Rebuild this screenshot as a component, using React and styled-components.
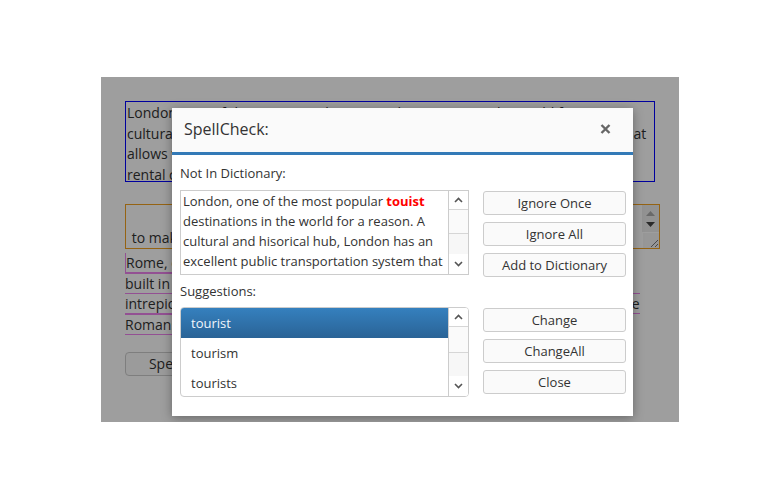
import styled, { createGlobalStyle } from "styled-components";

const GlobalStyle = createGlobalStyle`
  html, body {
    margin: 0;
    padding: 0;
    background: #ffffff;
    font-family: "Open Sans", "Noto Sans", Arial, sans-serif;
    color: #333333;
  }
  * { box-sizing: border-box; }
`;

const Page = styled.div`
  width: 780px;
  height: 500px;
  padding: 77px 0 0 101px;
`;

const Demo = styled.div`
  position: relative;
  width: 578px;
  height: 345px;
  padding: 24px;
  font-size: 14px;
  overflow: hidden;
  background: #ffffff;
`;

const RichBox = styled.div`
  width: 530px;
  height: 81px;
  border: 1px solid #0000ff;
  padding: 1px 1px 0;
  line-height: 20.5px;
  white-space: nowrap;
  overflow: hidden;
`;

const TextArea = styled.div`
  position: relative;
  margin-top: 22px;
  width: 535px;
  height: 45px;
  border: 1px solid #f0a020;
  padding: 0 24px 0 2px;
  line-height: 22px;
  white-space: pre;
  overflow: hidden;
`;

const Spinner = styled.div`
  position: absolute;
  top: 0;
  right: 0;
  width: 17px;
  height: 100%;
  background: #ececec;
  display: flex;
  flex-direction: column;
  align-items: center;
`;

const SpinArrows = styled.div`
  height: 27px;
  display: flex;
  flex-direction: column;
  align-items: center;
  justify-content: center;
  gap: 6px;
`;

const Grip = styled.div`
  flex: 1;
  width: 100%;
  border-top: 1px solid #ffffff;
  border-left: 1px solid #ffffff;
  background: #f4f4f4;
  display: flex;
  align-items: flex-end;
  justify-content: flex-end;
`;

const RomeBox = styled.div`
  margin-top: 4px;
  width: 525px;
  line-height: 20.5px;
  white-space: nowrap;
  overflow: hidden;
  span {
    border: 1px solid #ee82ee;
  }
`;

const DemoButton = styled.div`
  margin-top: 17px;
  width: 122px;
  height: 24px;
  border: 1px solid #cccccc;
  border-radius: 4px;
  background: #fafafa;
  font-size: 14px;
  line-height: 22px;
  text-align: center;
`;

const Overlay = styled.div`
  position: absolute;
  inset: 0;
  background: rgba(0, 0, 0, 0.38);
`;

const Dialog = styled.div`
  position: absolute;
  left: 71px;
  top: 31px;
  width: 461px;
  height: 308px;
  background: #ffffff;
  box-shadow: 0 2px 10px rgba(0, 0, 0, 0.35);
  display: flex;
  flex-direction: column;
`;

const Header = styled.div`
  height: 47px;
  background: #fafafa;
  border-bottom: 3px solid #337ab7;
  display: flex;
  align-items: center;
  justify-content: space-between;
  padding: 0 22px 2px 12px;
`;

const Title = styled.div`
  font-size: 16px;
  color: #333333;
`;

const Body = styled.div`
  padding: 8px 7px 0 8px;
  font-size: 13px;
`;

const Label = styled.div`
  height: 18px;
  line-height: 18px;
  color: #333333;
  margin-top: ${(p) => p.$top}px;
`;

const Row = styled.div`
  display: flex;
  gap: 14px;
  margin-top: ${(p) => p.$top}px;
`;

const Box = styled.div`
  width: 289px;
  height: ${(p) => p.$h}px;
  border: 1px solid #cccccc;
  border-radius: ${(p) => p.$r}px;
  display: flex;
  overflow: hidden;
`;

const TextContent = styled.div`
  flex: 1;
  padding: 0 2px;
  line-height: 20px;
  color: #333333;
  b {
    color: #ff0000;
  }
`;

const List = styled.div`
  flex: 1;
  display: flex;
  flex-direction: column;
`;

const Item = styled.div`
  height: 30px;
  line-height: 30px;
  padding-left: 10px;
  color: ${(p) => (p.$selected ? "#f0f6fc" : "#333333")};
  background: ${(p) =>
    p.$selected ? "linear-gradient(#3580be, #2a6396)" : "transparent"};
`;

const Scroll = styled.div`
  width: 20px;
  border-left: 1px solid #cccccc;
  display: flex;
  flex-direction: column;
  background: #f7f7f7;
`;

const ScrollButton = styled.div`
  height: ${(p) => p.$h}px;
  display: flex;
  align-items: center;
  justify-content: center;
  background: #ffffff;
  border-bottom: ${(p) => (p.$line ? "1px solid #d6d6d6" : "none")};
`;

const Thumb = styled.div`
  height: ${(p) => p.$h}px;
  background: #fafafa;
  border-bottom: 1px solid #d6d6d6;
`;

const Track = styled.div`
  flex: 1;
`;

const Buttons = styled.div`
  width: 143px;
  display: flex;
  flex-direction: column;
  gap: 7px;
  padding-top: 1px;
`;

const Button = styled.div`
  height: 24px;
  border: 1px solid #cccccc;
  border-radius: 3px;
  background: #fafafa;
  text-align: center;
  line-height: 22px;
  color: #333333;
`;

const Chevron = ({ up }) => (
  <svg width="9" height="6" viewBox="0 0 9 6">
    <path
      d={up ? "M1 5 L4.5 1.5 L8 5" : "M1 1 L4.5 4.5 L8 1"}
      fill="none"
      stroke="#555"
      strokeWidth="1.6"
    />
  </svg>
);

const Triangle = ({ up }) => (
  <svg width="9" height="5" viewBox="0 0 9 5">
    <path d={up ? "M0 5 L4.5 0 L9 5Z" : "M0 0 L4.5 5 L9 0Z"} fill={up ? "#aaa" : "#444"} />
  </svg>
);

const GripIcon = () => (
  <svg width="9" height="9" viewBox="0 0 9 9">
    <path d="M1 8 L8 1 M5 8 L8 5" stroke="#777" strokeWidth="1" />
  </svg>
);

const CloseIcon = () => (
  <svg width="11" height="10" viewBox="0 0 11 10">
    <path d="M1.5 1 L9.5 9 M9.5 1 L1.5 9" stroke="#666" strokeWidth="2.4" />
  </svg>
);

const ScrollBar = ({ top, thumb }) => (
  <Scroll>
    <ScrollButton $h={top} $line>
      <Chevron up />
    </ScrollButton>
    <Thumb $h={thumb} />
    <Track />
    <ScrollButton $h={20}>
      <Chevron />
    </ScrollButton>
  </Scroll>
);

export default function App() {
  return (
    <Page>
      <GlobalStyle />
      <Demo>
        <RichBox>
          London, one of the most popular tourist destinations in the world for a
          <br />
          cultural and hisorical hub, London has an excellent public transport system that
          <br />
          allows visitors to see all the fantastic sights without spending a ton of money
          <br />
          rental car or taxi fares.
        </RichBox>
        <TextArea>
          {"                                                                                       review\n to make sure it is right."}
          <Spinner>
            <SpinArrows>
              <Triangle up />
              <Triangle />
            </SpinArrows>
            <Grip>
              <GripIcon />
            </Grip>
          </Spinner>
        </TextArea>
        <RomeBox>
          <span>
            Rome, one of the oldest cities in the world, is a destination for
            <br />
            built in a day, yet it has drawn the curious and the
            <br />
            intrepid for longer than most modern cities in the world have existed, since the
            <br />
            Romans first laid the roads that carried the visitors.
          </span>
        </RomeBox>
        <DemoButton>Spell Check</DemoButton>
        <Overlay />
        <Dialog>
          <Header>
            <Title>SpellCheck:</Title>
            <CloseIcon />
          </Header>
          <Body>
            <Label $top={1}>Not In Dictionary:</Label>
            <Row $top={8}>
              <Box $h={85} $r={0}>
                <TextContent>
                  London, one of the most popular <b>touist</b> destinations in
                  the world for a reason. A cultural and hisorical hub, London
                  has an excellent public transportation system that
                </TextContent>
                <ScrollBar top={19} thumb={24} />
              </Box>
              <Buttons>
                <Button>Ignore Once</Button>
                <Button>Ignore All</Button>
                <Button>Add to Dictionary</Button>
              </Buttons>
            </Row>
            <Label $top={5}>Suggestions:</Label>
            <Row $top={7}>
              <Box $h={90} $r={4}>
                <List>
                  <Item $selected>tourist</Item>
                  <Item>tourism</Item>
                  <Item>tourists</Item>
                </List>
                <ScrollBar top={19} thumb={26} />
              </Box>
              <Buttons>
                <Button>Change</Button>
                <Button>ChangeAll</Button>
                <Button>Close</Button>
              </Buttons>
            </Row>
          </Body>
        </Dialog>
      </Demo>
    </Page>
  );
}
